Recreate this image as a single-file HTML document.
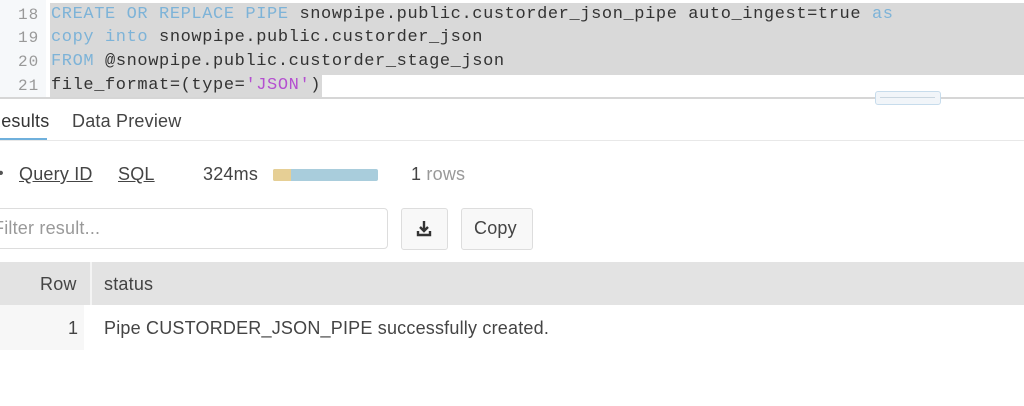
<!DOCTYPE html>
<html><head><style>
body{margin:0;width:1024px;height:406px;background:#fff;position:relative;overflow:hidden;font-family:"Liberation Sans",sans-serif;}
.a{position:absolute;}
.t{font-size:18px;letter-spacing:0.2px}
.code{font-family:"Liberation Mono",monospace;font-size:17px;letter-spacing:0.6px;color:#333;white-space:pre;}
.ln{font-family:"Liberation Mono",monospace;font-size:16px;color:#999;letter-spacing:1px;}
.k{color:#7db3d8}
.s{color:#b44fd0}
</style></head><body>
<div class="a" style="left:0;top:0;width:46px;height:98px;background:#f6f8fa"></div>
<div class="a" style="left:50px;top:3px;width:974px;height:72px;background:#d9d9d9"></div>
<div class="a" style="left:50px;top:75px;width:272px;height:23px;background:#d9d9d9"></div>
<div class="a ln" style="left:18px;top:6px">18</div>
<div class="a ln" style="left:18px;top:29px">19</div>
<div class="a ln" style="left:18px;top:53px">20</div>
<div class="a ln" style="left:18px;top:77px">21</div>
<div class="a code" style="left:51px;top:5px"><span class="k">CREATE OR REPLACE PIPE</span> snowpipe.public.custorder_json_pipe auto_ingest=true <span class="k">as</span></div>
<div class="a code" style="left:51px;top:28px"><span class="k">copy into</span> snowpipe.public.custorder_json</div>
<div class="a code" style="left:51px;top:52px"><span class="k">FROM</span> @snowpipe.public.custorder_stage_json</div>
<div class="a code" style="left:51px;top:76px">file_format=(type=<span class="s">'JSON'</span>)</div>
<div class="a" style="left:0;top:97px;width:1024px;height:2px;background:#d6d6d6"></div>
<div class="a" style="left:875px;top:91px;width:64px;height:12px;border:1px solid #c7dcec;border-radius:3px;background:#f1f5f9"></div>
<div class="a" style="left:880px;top:97px;width:55px;height:1px;background:#c9d6e0"></div>
<div class="a t" style="left:-12px;top:111px;color:#333">Results</div>
<div class="a" style="left:0;top:138px;width:47px;height:3px;background:#6fb0dc"></div>
<div class="a t" style="left:72px;top:111px;color:#444">Data Preview</div>
<div class="a" style="left:0;top:140px;width:1024px;height:1px;background:#e8e8e8"></div>
<div class="a" style="left:-2px;top:165px;font-size:16px;color:#555">•</div>
<div class="a t" style="left:19px;top:164px;color:#444;text-decoration:underline">Query ID</div>
<div class="a t" style="left:118px;top:164px;color:#444;text-decoration:underline">SQL</div>
<div class="a t" style="left:203px;top:164px;color:#444">324ms</div>
<div class="a" style="left:273px;top:169px;width:105px;height:12px;background:#a9cddc;border-radius:2px"></div>
<div class="a" style="left:273px;top:169px;width:18px;height:12px;background:#e6cf95;border-radius:2px 0 0 2px"></div>
<div class="a t" style="left:411px;top:164px;color:#444">1 <span style="color:#999">rows</span></div>
<div class="a" style="left:-10px;top:208px;width:396px;height:39px;border:1px solid #ddd;border-radius:4px"></div>
<div class="a t" style="left:-7px;top:218px;color:#999">Filter result...</div>
<div class="a" style="left:401px;top:208px;width:45px;height:40px;border:1px solid #ddd;border-radius:3px;background:#f8f8f8"></div>
<svg class="a" style="left:414px;top:218px" width="20" height="20" viewBox="0 0 20 20"><path d="M10 3v9M6 9l4 4 4-4M4 13v4h12v-4" fill="none" stroke="#333" stroke-width="2.4"/></svg>
<div class="a" style="left:461px;top:208px;width:70px;height:40px;border:1px solid #ddd;border-radius:3px;background:#f8f8f8"></div>
<div class="a t" style="left:474px;top:218px;color:#444">Copy</div>
<div class="a" style="left:0;top:262px;width:1024px;height:43px;background:#e3e3e3"></div>
<div class="a" style="left:90px;top:262px;width:2px;height:43px;background:#f4f4f4"></div>
<div class="a t" style="left:40px;top:274px;color:#444">Row</div>
<div class="a t" style="left:104px;top:274px;color:#444">status</div>
<div class="a" style="left:0;top:305px;width:84px;height:45px;background:#f7f7f7"></div>
<div class="a t" style="left:68px;top:318px;color:#444">1</div>
<div class="a t" style="left:104px;top:318px;color:#444">Pipe CUSTORDER_JSON_PIPE successfully created.</div>
</body></html>
